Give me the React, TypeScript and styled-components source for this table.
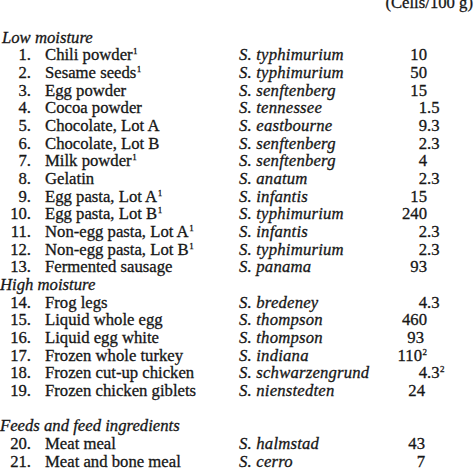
import React from "react";
import styled, { createGlobalStyle } from "styled-components";

const Global = createGlobalStyle`
  html, body { margin: 0; padding: 0; background: #ffffff; }
  body { overflow: hidden; width: 474px; height: 474px; }
`;

const Page = styled.div`
  width: 474px;
  height: 474px;
  overflow: hidden;
  background: #ffffff;
  color: #161616;
  font-family: "Liberation Serif", "Times New Roman", serif;
  font-size: 16.7px;
  line-height: 17.67px;
  -webkit-text-stroke: 0.3px #161616;
`;

const Table = styled.div`
  margin-top: -6.5px;
  display: grid;
  grid-template-columns: 31px 208px 150px 38px 1fr;
  grid-auto-rows: 17.67px;
`;

const Units = styled.div`
  grid-column: 1 / -1;
  text-align: right;
  white-space: nowrap;
  padding-right: 1px;
`;

const Blank = styled.div`
  grid-column: 1 / -1;
`;

const Section = styled.div`
  grid-column: 1 / -1;
  font-style: italic;
  white-space: nowrap;
  padding-left: ${(p: { $indent: number }) => p.$indent}px;
`;

const Num = styled.div`
  text-align: right;
  white-space: nowrap;
`;

const Name = styled.div`
  padding-left: 14px;
  white-space: nowrap;
`;

const Species = styled.div`
  font-style: italic;
  white-space: nowrap;
  letter-spacing: 0.2px;
`;

const IntPart = styled.div`
  text-align: right;
  white-space: nowrap;
`;

const FracPart = styled.div`
  text-align: left;
  white-space: nowrap;
`;

const Sup = styled.sup`
  font-size: 9px;
  line-height: 0;
  vertical-align: 6px;
  margin-left: 0.5px;
`;

type Row = {
  n: number;
  name: string;
  nameSup?: string;
  species: string;
  int: string;
  frac?: string;
  valSup?: string;
  shift?: number;
};

type Item = { kind: "row"; row: Row } | { kind: "section"; title: string; indent: number } | { kind: "blank" };

const items: Item[] = [
  { kind: "blank" },
  { kind: "section", title: "Low moisture", indent: 2 },
  { kind: "row", row: { n: 1, name: "Chili powder", nameSup: "1", species: "S. typhimurium", int: "10" } },
  { kind: "row", row: { n: 2, name: "Sesame seeds", nameSup: "1", species: "S. typhimurium", int: "50" } },
  { kind: "row", row: { n: 3, name: "Egg powder", species: "S. senftenberg", int: "15" } },
  { kind: "row", row: { n: 4, name: "Cocoa powder", species: "S. tennessee", int: "1", frac: ".5" } },
  { kind: "row", row: { n: 5, name: "Chocolate, Lot A", species: "S. eastbourne", int: "9", frac: ".3" } },
  { kind: "row", row: { n: 6, name: "Chocolate, Lot B", species: "S. senftenberg", int: "2", frac: ".3" } },
  { kind: "row", row: { n: 7, name: "Milk powder", nameSup: "1", species: "S. senftenberg", int: "4", shift: 2 } },
  { kind: "row", row: { n: 8, name: "Gelatin", species: "S. anatum", int: "2", frac: ".3" } },
  { kind: "row", row: { n: 9, name: "Egg pasta, Lot A", nameSup: "1", species: "S. infantis", int: "15" } },
  { kind: "row", row: { n: 10, name: "Egg pasta, Lot B", nameSup: "1", species: "S. typhimurium", int: "240" } },
  { kind: "row", row: { n: 11, name: "Non-egg pasta, Lot A", nameSup: "1", species: "S. infantis", int: "2", frac: ".3" } },
  { kind: "row", row: { n: 12, name: "Non-egg pasta, Lot B", nameSup: "1", species: "S. typhimurium", int: "2", frac: ".3" } },
  { kind: "row", row: { n: 13, name: "Fermented sausage", species: "S. panama", int: "93" } },
  { kind: "section", title: "High moisture", indent: 0 },
  { kind: "row", row: { n: 14, name: "Frog legs", species: "S. bredeney", int: "4", frac: ".3" } },
  { kind: "row", row: { n: 15, name: "Liquid whole egg", species: "S. thompson", int: "460" } },
  { kind: "row", row: { n: 16, name: "Liquid egg white", species: "S. thompson", int: "93", shift: -3 } },
  { kind: "row", row: { n: 17, name: "Frozen whole turkey", species: "S. indiana", int: "110", valSup: "2" } },
  { kind: "row", row: { n: 18, name: "Frozen cut-up chicken", species: "S. schwarzengrund", int: "4", frac: ".3", valSup: "2" } },
  { kind: "row", row: { n: 19, name: "Frozen chicken giblets", species: "S. nienstedten", int: "24", shift: -2 } },
  { kind: "blank" },
  { kind: "section", title: "Feeds and feed ingredients", indent: 0 },
  { kind: "row", row: { n: 20, name: "Meat meal", species: "S. halmstad", int: "43", shift: -2 } },
  { kind: "row", row: { n: 21, name: "Meat and bone meal", species: "S. cerro", int: "7", shift: -2 } },
];

export default function App() {
  return (
    <Page>
      <Global />
      <Table>
        <Units>(Cells/100 g)</Units>
        {items.map((it, i) => {
          if (it.kind === "blank") return <Blank key={i} />;
          if (it.kind === "section")
            return (
              <Section key={i} $indent={it.indent}>
                {it.title}
              </Section>
            );
          const r = it.row;
          return (
            <React.Fragment key={i}>
              <Num>{r.n}.</Num>
              <Name>
                {r.name}
                {r.nameSup && <Sup>{r.nameSup}</Sup>}
              </Name>
              <Species>{r.species}</Species>
              <IntPart style={r.shift ? { paddingRight: -Math.min(0, r.shift) } : undefined}>
                {r.int}
                {!r.frac && r.valSup && <Sup>{r.valSup}</Sup>}
              </IntPart>
              <FracPart>
                {r.frac}
                {r.frac && r.valSup && <Sup>{r.valSup}</Sup>}
              </FracPart>
            </React.Fragment>
          );
        })}
      </Table>
    </Page>
  );
}
